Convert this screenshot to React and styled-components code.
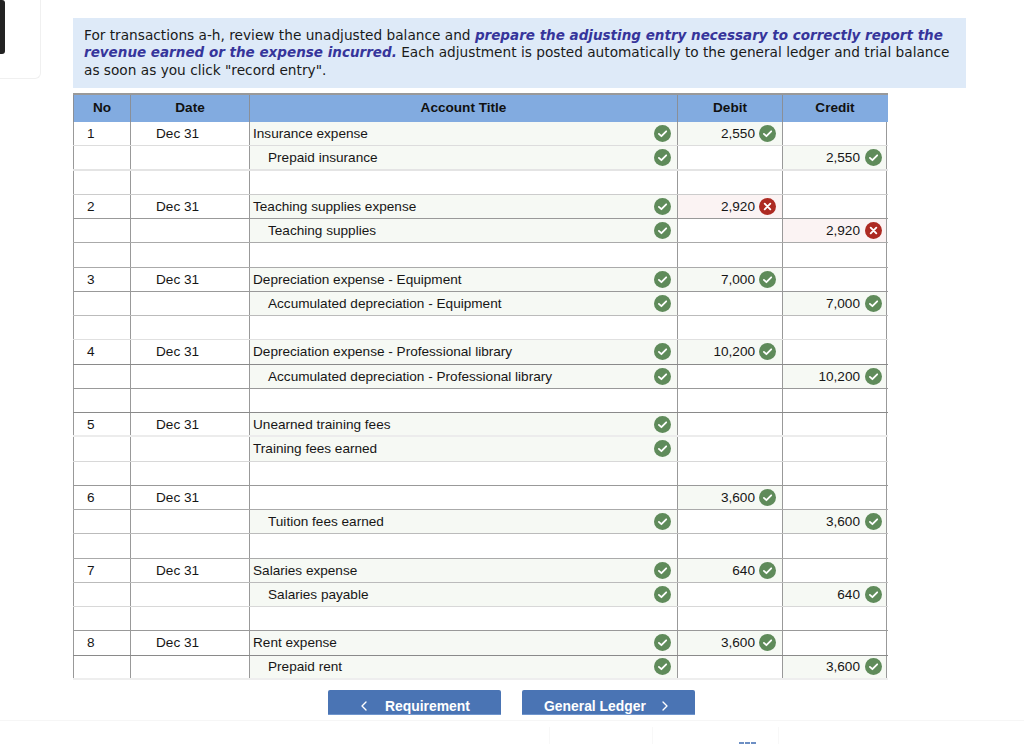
import styled, { createGlobalStyle } from 'styled-components';
import { ChevronLeft, ChevronRight } from 'lucide-react';

const GlobalStyle = createGlobalStyle`
	html,
	body {
		margin: 0;
		padding: 0;
		background: #fff;
	}
`;

const Page = styled.div`
	display: flex;
	width: 1024px;
	height: 744px;
	overflow: hidden;
	font-family: 'Liberation Sans', Arial, sans-serif;
	color: #161616;
`;

const SideCard = styled.div`
	flex: none;
	width: 40px;
	height: 78px;
	border-right: 1px solid #f0f0f0;
	border-bottom: 1px solid #f0f0f0;
	border-bottom-right-radius: 6px;
`;

const SideBar = styled.div`
	width: 5px;
	height: 54px;
	background: #222;
	border-bottom-right-radius: 3px;
	border-top-right-radius: 3px;
`;

const Main = styled.div`
	margin-left: 32px;
	padding-top: 18px;
	width: 951px;
`;

const Instructions = styled.div`
	box-sizing: border-box;
	width: 893px;
	height: 70px;
	padding: 9px 11px;
	background: #deeaf8;
	font-family: 'DejaVu Sans', Verdana, sans-serif;
	font-size: 13.7px;
	line-height: 17.4px;
	color: #1a1a1a;

	strong {
		font-size: 13.5px;
		font-style: italic;
		color: #36359b;
	}
`;

const Table = styled.div`
	width: 815px;
	margin-top: 5px;
	border-top: 2px solid #999;
`;

const columns = '57px 119px 428px 105px 105px';

const HeadRow = styled.div`
	display: grid;
	grid-template-columns: ${columns};
	height: 27px;
	background: #82abe0;
`;

const HeadCell = styled.div`
	display: flex;
	align-items: center;
	justify-content: center;
	padding-bottom: 2px;
	border-left: 1px solid #8a8f98;
	font-size: 13.6px;
	font-weight: 700;
	color: #111;
`;

const Row = styled.div`
	display: grid;
	grid-template-columns: ${columns};
	box-sizing: border-box;
	height: 24.25px;
	border-bottom: ${(props) => (props.$soft ? 2 : 1)}px solid ${(props) => props.$line};
`;

const Cell = styled.div`
	display: flex;
	align-items: center;
	border-left: 1px solid #999;
	font-size: 13.6px;
	background: ${(props) =>
		props.$state === 'ok' ? '#f6f9f4' : props.$state === 'bad' ? '#fbf3f3' : '#fff'};
`;

const NoCell = styled(Cell)`
	padding-left: 13px;
`;

const DateCell = styled(Cell)`
	padding-left: 25px;
`;

const AccountCell = styled(Cell)`
	justify-content: space-between;
	padding-left: ${(props) => (props.$indent ? 18 : 3)}px;
	padding-right: 6px;
`;

const AmountCell = styled(Cell)`
	justify-content: flex-end;
	gap: 4px;
	padding-right: 6px;
`;

const CreditCell = styled(AmountCell)`
	gap: 5px;
	padding-right: 4px;
	border-right: 1px solid #999;
`;

const Mark = styled.svg`
	flex: none;
	display: block;
	width: 17px;
	height: 17px;
`;

const Buttons = styled.div`
	display: flex;
	gap: 21.5px;
	margin-left: 255px;
	margin-top: 10.25px;
`;

const NavButton = styled.div`
	display: flex;
	align-items: center;
	gap: ${(props) => props.$gap}px;
	box-sizing: border-box;
	width: 172.5px;
	height: 25px;
	padding-top: 8px;
	padding-left: ${(props) => props.$inset}px;
	background: #4a74b4;
	border-radius: 2px 2px 0 0;
	border-bottom: 1px solid #6f95cd;
	font-size: 13.9px;
	font-weight: 700;
	color: #fff;
`;

const Footer = styled.div`
	display: grid;
	grid-template-columns: 549px 103px 127px;
	box-sizing: border-box;
	width: 1024px;
	height: 24px;
	margin-top: 5px;
	margin-left: -73px;
	padding-top: 6px;
	border-top: 1px solid #f6f6f6;
`;

const FooterCell = styled.div`
	display: flex;
	align-items: flex-end;
	justify-content: flex-end;
	gap: 1px;
	padding-right: 22px;
	border-left: 1px solid ${(props) => (props.$first ? 'transparent' : '#f8f8f8')};
	&:last-child {
		border-right: 1px solid #f8f8f8;
	}
`;

const Dash = styled.span`
	width: 5px;
	height: 2px;
	background: #6d8fc4;
`;

const CheckMark = () => (
	<Mark viewBox="0 0 17 17">
		<circle cx="8.5" cy="8.5" r="8.5" fill="#5f8b5a" />
		<path
			d="M4.9 8.9l2.5 2.3 4.8-4.9"
			fill="none"
			stroke="#fff"
			strokeWidth="1.8"
			strokeLinecap="round"
			strokeLinejoin="round"
		/>
	</Mark>
);

const CrossMark = () => (
	<Mark viewBox="0 0 17 17">
		<circle cx="8.5" cy="8.5" r="8.5" fill="#ad2a22" />
		<path
			d="M5.7 5.7l5.6 5.6M11.3 5.7l-5.6 5.6"
			fill="none"
			stroke="#fff"
			strokeWidth="1.9"
			strokeLinecap="round"
		/>
	</Mark>
);

// one entry per transaction: first line, second line
const entries = [
	{ no: 1, first: 'Insurance expense', second: 'Prepaid insurance', amount: '2,550' },
	{ no: 2, first: 'Teaching supplies expense', second: 'Teaching supplies', amount: '2,920', wrong: true },
	{ no: 3, first: 'Depreciation expense - Equipment', second: 'Accumulated depreciation - Equipment', amount: '7,000' },
	{ no: 4, first: 'Depreciation expense - Professional library', second: 'Accumulated depreciation - Professional library', amount: '10,200' },
	{ no: 5, first: 'Unearned training fees', second: 'Training fees earned', flat: true },
	{ no: 6, first: '', second: 'Tuition fees earned', amount: '3,600' },
	{ no: 7, first: 'Salaries expense', second: 'Salaries payable', amount: '640' },
	{ no: 8, first: 'Rent expense', second: 'Prepaid rent', amount: '3,600', last: true },
];

// bottom line colour of each row, they are not even in the original
const lines = [
	'#ddd', '#e4e4e4', '#ccc',
	'#999', '#aaa', '#aaa',
	'#999', '#bbb', '#e0e0e0',
	'#8a8a8a', '#999', '#8a8a8a',
	'#ececec', '#d8d8d8', '#999',
	'#aaa', '#bbb', '#aaa',
	'#bbb', '#d8d8d8', '#999',
	'#8a8a8a', '#eee',
];

const softLines = [1, 12, 22];

const Amount = ({ value, wrong, as: Wrap }) => {
	const state = value ? (wrong ? 'bad' : 'ok') : undefined;
	return (
		<Wrap $state={state}>
			{value}
			{value && (wrong ? <CrossMark /> : <CheckMark />)}
		</Wrap>
	);
};

const Entry = ({ entry, index }) => {
	const at = index * 3;
	return (
		<>
			<Row $line={lines[at]} $soft={softLines.includes(at)}>
				<NoCell>{entry.no}</NoCell>
				<DateCell>Dec 31</DateCell>
				<AccountCell $state={entry.first ? 'ok' : undefined}>
					{entry.first}
					{entry.first && <CheckMark />}
				</AccountCell>
				<Amount as={AmountCell} value={entry.amount} wrong={entry.wrong} />
				<CreditCell />
			</Row>
			<Row $line={lines[at + 1]} $soft={softLines.includes(at + 1)}>
				<NoCell />
				<DateCell />
				<AccountCell $state="ok" $indent={!entry.flat}>
					{entry.second}
					<CheckMark />
				</AccountCell>
				<AmountCell />
				<Amount as={CreditCell} value={entry.amount} wrong={entry.wrong} />
			</Row>
			{!entry.last && (
				<Row $line={lines[at + 2]} $soft={softLines.includes(at + 2)}>
					<NoCell />
					<DateCell />
					<AccountCell />
					<AmountCell />
					<CreditCell />
				</Row>
			)}
		</>
	);
};

function App() {
	return (
		<>
			<GlobalStyle />
			<Page>
				<SideCard>
					<SideBar />
				</SideCard>
				<Main>
					<Instructions>
						For transactions a-h, review the unadjusted balance and{' '}
						<strong>
							prepare the adjusting entry necessary to correctly report the revenue earned or the
							expense incurred.
						</strong>{' '}
						Each adjustment is posted automatically to the general ledger and trial balance as soon
						as you click "record entry".
					</Instructions>
					<Table>
						<HeadRow>
							<HeadCell>No</HeadCell>
							<HeadCell>Date</HeadCell>
							<HeadCell>Account Title</HeadCell>
							<HeadCell>Debit</HeadCell>
							<HeadCell>Credit</HeadCell>
						</HeadRow>
						{entries.map((entry, index) => (
							<Entry key={entry.no} entry={entry} index={index} />
						))}
					</Table>
					<Buttons>
						<NavButton $inset={28} $gap={13}>
							<ChevronLeft size={16} strokeWidth={2} />
							Requirement
						</NavButton>
						<NavButton $inset={22} $gap={11}>
							General Ledger
							<ChevronRight size={16} strokeWidth={2} />
						</NavButton>
					</Buttons>
					<Footer>
						<FooterCell $first />
						<FooterCell />
						<FooterCell>
							<Dash />
							<Dash />
							<Dash />
						</FooterCell>
					</Footer>
				</Main>
			</Page>
		</>
	);
}

export default App;
